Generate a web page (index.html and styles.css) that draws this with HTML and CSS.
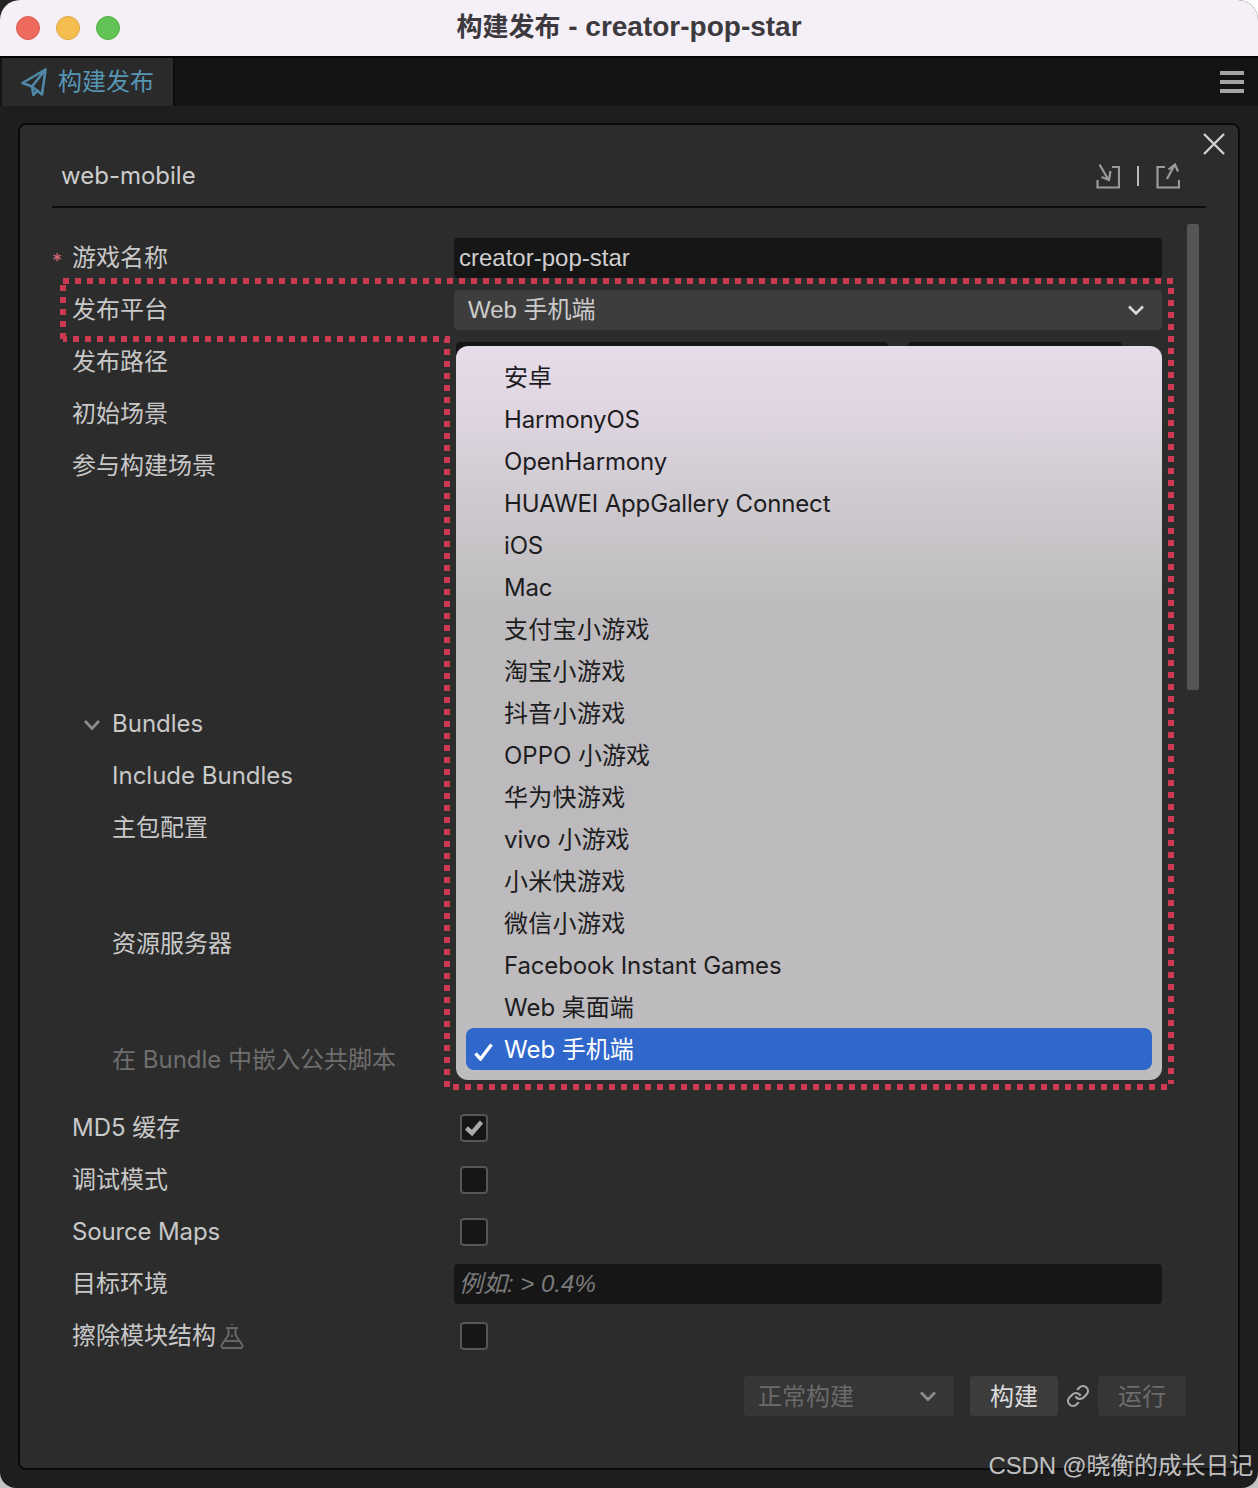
FILE: index.html
```html
<!DOCTYPE html>
<html lang="zh">
<head>
<meta charset="utf-8">
<title>构建发布 - creator-pop-star</title>
<link rel="stylesheet" href="styles.css">
</head>
<body>
<div class="window">
  <header class="titlebar">
    <div class="lights"><span class="light red"></span><span class="light yellow"></span><span class="light green"></span></div>
    <h1 class="title">构建发布<span class="title-latin"> - creator-pop-star</span></h1>
  </header>
  <nav class="tabbar">
    <div class="tab">
      <svg class="tab-icon" viewBox="0 0 26 28" fill="none" stroke="currentColor" stroke-width="2.6" stroke-linejoin="round" stroke-linecap="round"><path d="M24.500 1.500 1.500 15l9.500 3.500L24.500 1.500 21 26.500 11 18.500l1.500 8.500 4-4.500"/></svg>
      <span class="tab-text">构建发布</span>
    </div>
    <div class="burger"><i></i><i></i><i></i></div>
  </nav>
  <main class="main">
    <section class="panel">
      <svg class="close" viewBox="0 0 24 24" fill="none" stroke="currentColor" stroke-width="2.4"><path d="M2 2 22 22M22 2 2 22"/></svg>
      <div class="panel-head">
        <span class="panel-name">web-mobile</span>
        <div class="head-icons">
          <svg class="head-icon" viewBox="0 0 24 26" fill="none" stroke="currentColor" stroke-width="2.200"><path d="M1.500 17v7.500h21.500V4h-7"/><path d="M3.500 1.500 12 16M14.500 8 13 17 5.500 14"/></svg>
          <i class="head-sep"></i>
          <svg class="head-icon" viewBox="0 0 24 26" fill="none" stroke="currentColor" stroke-width="2.200"><path d="M9 4H1.500v20.500h21.500V17"/><path d="M11 16 18.500 2M12.500 6.500 19 1.500l3 7"/></svg>
        </div>
      </div>
      <div class="form">
        <div class="row">
          <label class="label"><span class="star">*</span>游戏名称</label>
          <div class="input mono">creator-pop-star</div>
        </div>
        <div class="row">
          <label class="label">发布平台</label>
          <div class="select"><span class="select-text">Web 手机端</span><svg class="chev" viewBox="0 0 18 12" fill="none" stroke="currentColor" stroke-width="2.600"><path d="M2 2.500 9 9.500 16 2.500"/></svg></div>
        </div>
        <div class="row">
          <label class="label">发布路径</label>
          <div class="path"><div class="input path-main"></div><div class="input path-side"></div></div>
        </div>
        <div class="row"><label class="label">初始场景</label></div>
        <div class="row row-scenes"><label class="label">参与构建场景</label></div>
        <div class="row">
          <label class="label nested"><svg class="bundle-chev" viewBox="0 0 18 12" fill="none" stroke="currentColor" stroke-width="2.800"><path d="M2 2 9 9.500 16 2"/></svg>Bundles</label>
        </div>
        <div class="row"><label class="label nested">Include Bundles</label></div>
        <div class="row row-tall"><label class="label nested">主包配置</label></div>
        <div class="row row-tall"><label class="label nested">资源服务器</label></div>
        <div class="row row-gap"><label class="label nested muted">在 Bundle 中嵌入公共脚本</label></div>
        <div class="row">
          <label class="label">MD5 缓存</label>
          <div class="check"><svg viewBox="0 0 20 18" fill="none" stroke="currentColor" stroke-width="4.400"><path d="M2.500 9 8 14 17.500 3"/></svg></div>
        </div>
        <div class="row"><label class="label">调试模式</label><div class="check"></div></div>
        <div class="row"><label class="label latin">Source Maps</label><div class="check"></div></div>
        <div class="row">
          <label class="label">目标环境</label>
          <div class="input placeholder">例如: &gt; 0.4%</div>
        </div>
        <div class="row">
          <label class="label">擦除模块结构<svg class="flask" viewBox="0 0 24 26" fill="none" stroke="currentColor" stroke-width="2"><path d="M6 5h12M8.500 5v7L2 21.500c-1 1.500-.5 3.500 1.500 3.500h17c2 0 2.500-2 1.500-3.500L15.500 12V5M4.500 18h15"/><circle cx="12" cy="13" r="1.200" fill="currentColor" stroke="none"/><circle cx="12" cy="1.500" r="1" fill="currentColor" stroke="none"/></svg></label>
          <div class="check"></div>
        </div>
      </div>
      <div class="actions">
        <div class="btn-select"><span class="btn-text">正常构建</span><svg class="chev" viewBox="0 0 18 12" fill="none" stroke="currentColor" stroke-width="2.800"><path d="M2 2.500 9 9.500 16 2.500"/></svg></div>
        <button class="btn btn-primary"><span class="btn-text">构建</span></button>
        <svg class="link" viewBox="0 0 24 24" fill="none" stroke="currentColor" stroke-width="2.200" stroke-linecap="round"><path d="M10 13a5 5 0 0 0 7.540.540l3-3a5 5 0 0 0-7.070-7.070l-1.720 1.710"/><path d="M14 11a5 5 0 0 0-7.540-.540l-3 3a5 5 0 0 0 7.070 7.070l1.710-1.710"/></svg>
        <button class="btn btn-muted"><span class="btn-text">运行</span></button>
      </div>
      <div class="scrollbar"></div>
    </section>
  </main>

  <ul class="menu">
    <li>安卓</li>
    <li class="latin">HarmonyOS</li>
    <li class="latin">OpenHarmony</li>
    <li class="latin">HUAWEI AppGallery Connect</li>
    <li class="latin">iOS</li>
    <li class="latin">Mac</li>
    <li class="wide">支付宝小游戏</li>
    <li class="wide">淘宝小游戏</li>
    <li class="wide">抖音小游戏</li>
    <li>OPPO 小游戏</li>
    <li class="wide">华为快游戏</li>
    <li>vivo 小游戏</li>
    <li class="wide">小米快游戏</li>
    <li class="wide">微信小游戏</li>
    <li class="latin">Facebook Instant Games</li>
    <li>Web 桌面端</li>
    <li class="selected"><svg class="tick" viewBox="0 0 20 18" fill="none" stroke="currentColor" stroke-width="3.400"><path d="M1.500 10.500 6.500 16 17.500 1.500"/></svg>Web 手机端</li>
  </ul>

  <svg class="annotation" viewBox="0 0 1258 1488" fill="none"><path d="M63 281H1174M1171 288V1084M1167 1087H447M447 1087V339H63M63 339V281" stroke="#cc3a52" stroke-width="6" stroke-dasharray="6 6"/></svg>
  <div class="watermark">CSDN @晓衡的成长日记</div>
</div>
</body>
</html>
```
FILE: styles.css
```css
* { box-sizing: border-box; }
html, body { margin: 0; padding: 0; }
body {
  width: 1258px;
  height: 1488px;
  overflow: hidden;
  background:
    linear-gradient(#c4c4c4, #c4c4c4) bottom / 100% 50% no-repeat,
    linear-gradient(90deg, #232323 50%, #fff 50%);
  font-family: Inter, "Noto Sans CJK SC", sans-serif;
  font-size: 24px;
  color: #c8c8c8;
}
.window {
  position: relative;
  width: 1258px;
  height: 1488px;
  display: flex;
  flex-direction: column;
  border-radius: 20px 20px 16px 16px;
  overflow: hidden;
  background: #1e1e1e;
}
.titlebar {
  height: 56px;
  flex: none;
  background: #f5f0f7;
  display: flex;
  align-items: center;
  justify-content: center;
  position: relative;
}
.lights { position: absolute; left: 16px; top: 16px; display: flex; gap: 16px; }
.light { width: 24px; height: 24px; border-radius: 50%; display: block; }
.red { background: #ee6a5f; border: 1px solid #dd5a50; }
.yellow { background: #f5bd4f; border: 1px solid #dfa53c; }
.green { background: #61c454; border: 1px solid #53ad47; }
.title {
  margin: 0 0 3px 0;
  font-size: 26px;
  line-height: 32px;
  font-weight: 700;
  color: #3c3a3e;
  font-family: "Liberation Sans", "Noto Sans CJK SC", sans-serif;
  white-space: pre;
}
.title-latin { font-size: 28px; }
.tabbar {
  height: 50px;
  flex: none;
  background: #141414;
  border-top: 2px solid #050505;
  display: flex;
  align-items: stretch;
  justify-content: space-between;
  padding-left: 2px;
}
.tab {
  width: 173px;
  background: #2a2a2a;
  border-right: 2px solid #0c0c0c;
  display: flex;
  align-items: center;
  gap: 11px;
  padding-left: 19px;
  color: #5795b4;
}
.tab-icon { width: 26px; height: 28px; flex: none; color: #4f88a6; }
.tab-text { padding-bottom: 5px; }
.burger {
  width: 24px;
  margin-right: 14px;
  display: flex;
  flex-direction: column;
  justify-content: center;
  gap: 5px;
}
.burger i { display: block; height: 4px; background: #a4a4a4; }
.main {
  flex: 1;
  min-height: 0;
  padding: 17px 18px 18px 18px;
  display: flex;
}
.panel {
  flex: 1;
  position: relative;
  background: #2c2c2c;
  border: 2px solid #0a0a0a;
  border-radius: 8px;
}
.close {
  position: absolute;
  right: 12px;
  top: 7px;
  width: 24px;
  height: 24px;
  color: #d0d0d0;
}
.panel-head {
  height: 83px;
  margin: 0 32px 0 32px;
  padding: 21px 26px 0 9px;
  border-bottom: 2px solid #0c0c0c;
  display: flex;
  align-items: center;
  justify-content: space-between;
}
.panel-name { color: #cccccc; line-height: 30px; }
.head-icons { display: flex; align-items: center; gap: 17px; color: #9a9a9a; }
.head-icon { width: 24px; height: 26px; display: block; }
.head-sep { display: block; width: 2px; height: 20px; background: #bbb; }
.form {
  margin: 24px 0 0 32px;
  width: 1110px;
  display: flex;
  flex-direction: column;
}
.row {
  min-height: 52px;
  display: grid;
  grid-template-columns: 402px 708px;
  align-items: center;
}
.row-scenes { height: 258px; align-items: start; padding-top: 6px; }
.row-tall { height: 116px; align-items: start; padding-top: 6px; }
.row-gap { height: 68px; align-items: start; padding-top: 6px; }
.label {
  grid-column: 1;
  padding-left: 20px;
  line-height: 40px;
  display: flex;
  align-items: center;
  position: relative;
  white-space: pre;
}
.latin { letter-spacing: -0.15px; }
.star {
  position: absolute;
  left: 0;
  top: 3px;
  color: #d36a74;
  font-size: 20px;
}
.nested { padding-left: 60px; }
.muted { color: #6e6e6e; }
.bundle-chev {
  position: absolute;
  left: 31px;
  top: 15px;
  width: 18px;
  height: 12px;
  color: #8c8c8c;
}
.input {
  grid-column: 2;
  height: 40px;
  background: #161616;
  border-radius: 4px;
  padding-left: 5px;
  line-height: 40px;
  color: #cfcfcf;
}
.mono { font-family: "Liberation Sans", sans-serif; }
.placeholder {
  font-style: italic;
  color: #7a7a7a;
  font-family: "Liberation Sans", "Noto Sans CJK SC", sans-serif;
}
.select {
  grid-column: 2;
  height: 40px;
  background: #3d3d3d;
  border-radius: 4px;
  padding: 0 17px 0 14px;
  display: flex;
  align-items: center;
  justify-content: space-between;
  color: #cccccc;
  font-family: "Liberation Sans", "Noto Sans CJK SC", sans-serif;
}
.select-text { padding-bottom: 5px; }
.chev { width: 18px; height: 12px; color: #d8d8d8; flex: none; }
.path { grid-column: 2; display: flex; gap: 20px; padding-left: 2px; }
.path-main { width: 432px; }
.path-side { width: 214px; }
.check {
  grid-column: 2;
  margin-left: 6px;
  width: 28px;
  height: 28px;
  background: #161616;
  border: 2px solid #565656;
  border-radius: 4px;
  display: flex;
  align-items: center;
  justify-content: center;
  color: #aaaaaa;
}
.check svg { width: 20px; height: 18px; }
.flask { width: 24px; height: 26px; margin-left: 4px; color: #666; }
.actions {
  margin: 14px 52px 0 0;
  display: flex;
  justify-content: flex-end;
  align-items: center;
}
.btn-select {
  width: 210px;
  height: 40px;
  background: #363636;
  border-radius: 4px;
  padding: 0 17px 0 14px;
  color: #6a6a6a;
  display: flex;
  align-items: center;
  justify-content: space-between;
  margin-right: 16px;
}
.btn-select .chev { color: #8c8c8c; }
.btn-text { display: block; padding-bottom: 4px; }
.btn {
  width: 88px;
  height: 40px;
  border: 0;
  border-radius: 4px;
  font: inherit;
  padding: 0;
}
.btn-primary { background: #3d3d3d; color: #dcdcdc; }
.btn-muted { background: #363636; color: #6c6c6c; }
.link { width: 24px; height: 24px; margin: 0 8px; color: #a8a8a8; }
.scrollbar {
  position: absolute;
  left: 1167px;
  top: 99px;
  width: 12px;
  height: 466px;
  background: #555555;
  border-radius: 2px;
}
.menu {
  position: absolute;
  left: 456px;
  top: 346px;
  width: 706px;
  height: 734px;
  margin: 0;
  padding: 10px;
  list-style: none;
  border-radius: 12px;
  color: #1d1d1f;
  background: linear-gradient(180deg, #e7dce9 0%, #e0d6e2 8%, #cdc9ce 22%, #bdbbbd 36%, #bcbabc 60%, #bebcbe 100%);
}
.menu li {
  height: 42px;
  line-height: 44px;
  padding-left: 38px;
  position: relative;
  white-space: pre;
}
.menu .wide { letter-spacing: 0.3px; }
.menu .selected { background: #2f67cb; color: #fff; border-radius: 8px; }
.tick {
  position: absolute;
  left: 8px;
  top: 15px;
  width: 20px;
  height: 18px;
}
.annotation {
  position: absolute;
  left: 0;
  top: 0;
  width: 1258px;
  height: 1488px;
  pointer-events: none;
}
.watermark {
  position: absolute;
  right: 5px;
  bottom: 6px;
  font-family: "Liberation Sans", "Noto Sans CJK SC", sans-serif;
  line-height: 32px;
  letter-spacing: -0.2px;
  color: #c0c0c0;
}
```
